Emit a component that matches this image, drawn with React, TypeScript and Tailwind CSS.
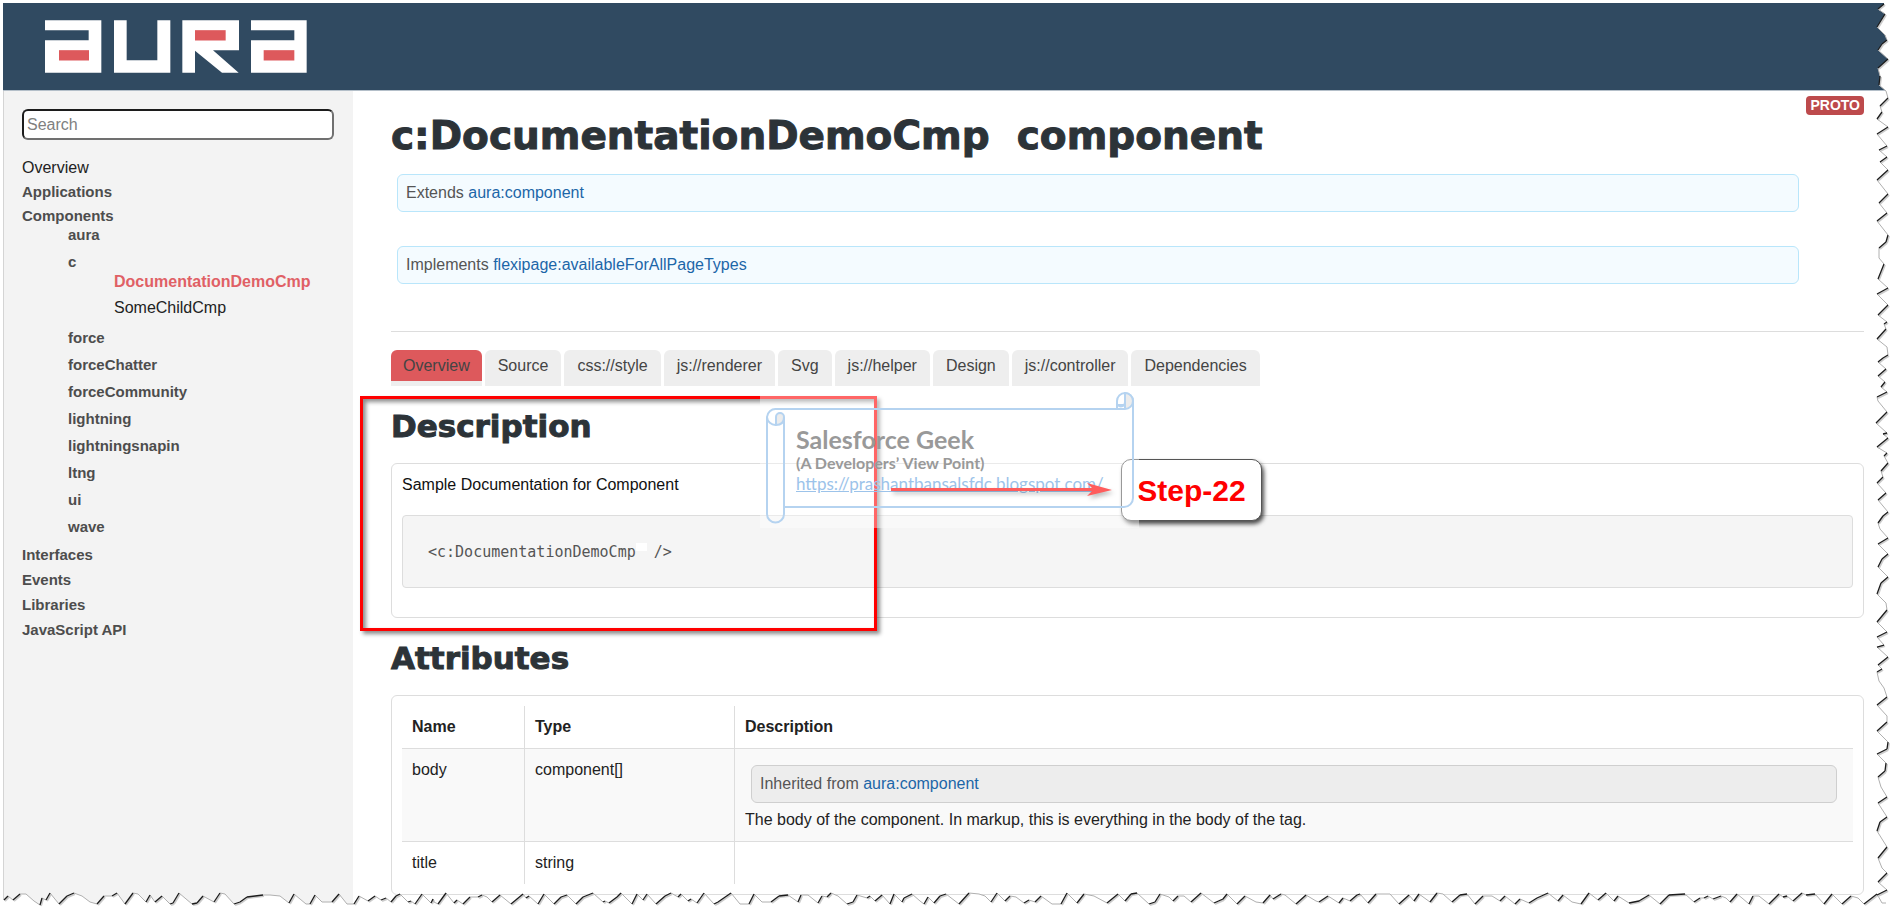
import React from "react";

const bottomEdge =
  "4,900 8,896 13,900 20,894 26,894 34,901 40,905 42,898 46,900 50,893 59,904 67,896 74,893 82,896 90,902 97,904 104,896 112,896 117,893 125,904 133,893 138,894 146,902 150,895 155,902 162,896 170,904 173,903 179,893 192,904 197,903 203,896 214,902 220,893 225,894 234,904 240,902 247,897 255,896 263,895 270,895 280,896 289,903 294,894 306,904 310,904 315,895 322,902 332,902 339,894 347,904 354,904 359,896 368,901 375,896 381,900 386,898 391,902 396,896 " +
  "400,894 408,902 411,901 415,904 422,894 431,903 433,899 434,902 438,904 446,893 454,903 457,900 463,904 470,897 478,897 482,895 487,897 492,902 500,895 511,904 523,894 526,898 529,896 538,904 544,894 554,904 561,897 567,895 576,904 583,897 593,893 603,902 605,901 609,903 617,897 621,893 632,904 637,894 643,900 647,894 656,904 665,896 671,893 678,897 681,894 688,901 691,899 697,903 704,893 714,904 718,902 731,893 740,904 749,904 754,894 762,902 771,902 779,896 788,895 798,902 801,895 808,895 818,903 822,896 827,897 831,893 838,896 847,904 853,902 857,895 867,898 870,896 875,901 882,895 890,904 894,894 902,902 904,898 912,894 " +
  "920,901 924,904 928,897 934,903 940,896 946,894 959,904 969,893 979,894 985,896 991,902 997,893 1005,901 1010,896 1016,897 1024,903 1029,900 1035,902 1041,896 1052,904 1061,904 1067,893 1077,903 1084,894 1094,896 1107,903 1118,894 1125,901 1131,894 1137,893 1149,904 1155,902 1160,894 1169,897 1173,901 1178,896 1184,896 1191,902 1201,893 1214,903 1223,899 1227,894 1237,904 1245,896 1256,902 1263,903 1270,895 1273,899 1281,894 1285,895 1296,904 1306,895 1316,901 1319,902 1328,896 1339,903 1343,898 1350,901 1357,895 1360,894 1368,903 1376,894 1390,894 1399,904 1409,895 1414,901 1419,894 1430,902 1437,893 1443,894 1452,902 1460,895 1467,894 1475,904 1483,896 1492,896 1500,901 1505,896 1515,904 1520,899 1529,903 1537,898 1548,893 1558,901 1563,895 1572,902 1581,904 1589,893 1598,900 1606,893 1614,901 1618,896 1629,903 1639,901 1649,895 1660,904 1669,895 1685,894 1694,902 " +
  "1700,898 1704,898 1708,896 1713,899 1721,896 1726,898 1730,902 1737,894 1742,898 1749,904 1753,896 1759,896 1769,904 1779,894 1783,897 1787,896 1793,901 1802,893 1806,895 1815,894 1824,904 1832,894 1842,904 1851,896 1858,898 1864,904 1877,894 1882,903 1886,903";

const rightEdge =
  "1884,4 1878,9 1885,14 1877,27 1885,35 1887,40 1882,44 1878,50 1888,59 1878,68 1880,76 1879,85 1886,91 1888,98 1880,106 1882,112 1877,119 1888,127 1877,134 1887,146 1879,150 1887,157 1880,162 1888,170 1877,180 1888,194 1879,203 1887,213 1877,221 1888,235 1886,242 1879,248 1879,258 1884,264 1878,279 1888,288 " +
  "1877,294 1888,305 1878,315 1887,322 1884,324 1886,329 1877,339 1887,347 1888,355 1883,358 1878,362 1886,369 1878,376 1885,382 1881,387 1887,392 1877,397 1878,401 1887,412 1876,423 1887,433 1883,434 1888,438 1877,447 1887,453 1884,456 1888,463 1881,471 1883,477 1877,483 1886,493 1878,500 1888,512 1883,516 1878,523 1880,529 1888,538 1878,544 1888,554 1882,559 1878,567 1888,577 1881,583 1877,594 1886,603 1887,610 1877,622 1887,632 1877,637 " +
  "1884,645 1877,647 1888,657 1878,665 1882,669 1877,672 1879,681 1884,688 1887,697 1877,705 1887,716 1887,722 1877,731 1888,742 1887,749 1877,754 1886,763 1885,771 1878,777 1881,787 1887,797 1878,803 1887,817 1880,822 1877,831 1887,847 1878,858 1882,868 1887,873 1878,882 1887,890 1877,895";

const tabs = [
  "Source",
  "css://style",
  "js://renderer",
  "Svg",
  "js://helper",
  "Design",
  "js://controller",
  "Dependencies",
];

const namespaces = [
  "force",
  "forceChatter",
  "forceCommunity",
  "lightning",
  "lightningsnapin",
  "ltng",
  "ui",
  "wave",
];

// the strokes facing the light are thin and gray, the others thick and dark
function TornLine({ points, axis }: { points: string; axis: 0 | 1 }) {
  const p = points.split(" ").map((s) => s.split(",").map(Number));
  let dark = "";
  let light = "";
  for (let i = 1; i < p.length; i++) {
    const seg = `M${p[i - 1][0]} ${p[i - 1][1]}L${p[i][0]} ${p[i][1]}`;
    if (p[i][axis] < p[i - 1][axis]) dark += seg;
    else light += seg;
  }
  return (
    <g fill="none">
      <path d={dark} stroke="#cccccc" strokeWidth="2" transform="translate(1 1)" />
      <path d={light} stroke="#b0b0b0" strokeWidth="1" />
      <path d={dark} stroke="#1c1c1c" strokeWidth="1.3" />
    </g>
  );
}

function Logo() {
  return (
    <svg viewBox="0 0 786 158" className="h-[53px] w-[262px]" role="img" aria-label="aura">
      <g fill="#ffffff">
        <path d="M0 0H169V158H0V60H131V30H0Z" />
        <path d="M207 0H245V120H337V0H376V158H207Z" />
        <path d="M412 0H582V90H504L581 158H531L450 92V158H412Z" />
        <path d="M618 0H785V158H618V60H748V30H618Z" />
      </g>
      <g fill="#dd595c">
        <path d="M42 90H132V121H42Z" />
        <path d="M450 30H542V61H450Z" />
        <path d="M656 90H748V121H656Z" />
      </g>
    </svg>
  );
}

function Sidebar() {
  return (
    <nav className="w-[350px] shrink-0 border-l border-[#d4d4d4] bg-[#f3f3f3] pl-[18px] text-[15px] font-bold text-[#4d4d4d]">
      <input
        type="text"
        placeholder="Search"
        aria-label="Search"
        className="mt-[18px] mb-4 block h-[31px] w-[312px] rounded-md border-2 border-t-[#1c1c1c] border-l-[#1c1c1c] border-r-[#707070] border-b-[#707070] bg-white px-[3px] text-base font-normal placeholder:text-[#808080]"
      />
      <ul>
        <li className="leading-6">
          <a href="#overview" className="text-base font-normal text-[#222222]">
            Overview
          </a>
        </li>
        <li className="leading-6">
          <a href="#applications">Applications</a>
        </li>
        <li>
          <a href="#components" className="block leading-6">
            Components
          </a>
          <ul className="-mt-[7px] mb-0.5 pl-[46px] leading-[27px]">
            <li>
              <a href="#aura">aura</a>
            </li>
            <li>
              <a href="#c" className="block">
                c
              </a>
              <ul className="-mt-1.5 mb-[3px] pl-[46px] text-base leading-[26px]">
                <li>
                  <a href="#demo" className="text-[#e06065]">
                    DocumentationDemoCmp
                  </a>
                </li>
                <li>
                  <a href="#child" className="font-normal text-[#222222]">
                    SomeChildCmp
                  </a>
                </li>
              </ul>
            </li>
            {namespaces.map((name) => (
              <li key={name}>
                <a href={`#${name}`}>{name}</a>
              </li>
            ))}
          </ul>
        </li>
        {["Interfaces", "Events", "Libraries", "JavaScript API"].map((name) => (
          <li key={name} className="leading-[25px]">
            <a href={`#${name}`}>{name}</a>
          </li>
        ))}
      </ul>
    </nav>
  );
}

function Heading({ children }: { children: React.ReactNode }) {
  return (
    <h2 className="mt-5 mb-[17px] font-['DejaVu_Sans',sans-serif] text-[31px] leading-10 font-bold text-[#2c3338] [-webkit-text-stroke:1px_#2c3338]">
      {children}
    </h2>
  );
}

function Watermark() {
  return (
    <div className="absolute top-[299px] left-[407px] h-[138px] w-[379px] bg-white/40">
      <svg
        viewBox="760 390 379 138"
        className="absolute inset-0 h-full w-full"
        fill="none"
        stroke="#b5d3f0"
        strokeWidth="2"
      >
        <path d="M776 409H1117V401A8 8 0 0 1 1133 401V498A9 9 0 0 1 1124 507H784" />
        <path d="M776 409A8.500 8.500 0 0 0 767 417V514A8.500 8.500 0 0 0 784 514V417" />
        <path
          d="M776 425V417A4 4 0 0 1 784 417Q784 425 776 425"
          fill="#ececec"
        />
        <path d="M767 417A8.500 8.500 0 0 0 776 425" />
        <path d="M1125 393A8 8 0 0 1 1125 409Z" fill="#ececec" />
        <path d="M1117 409H1125M1125 402A4 4 0 0 1 1118 405H1125" />
      </svg>
      <div className="relative pt-[35px] pl-9 font-['Lato','Open_Sans',sans-serif] text-[#999999]">
        <p className="text-[25px] leading-[28px] font-bold">Salesforce Geek</p>
        <p className="text-base leading-5 font-bold">(A Developers’ View Point)</p>
        <a
          href="https://prashantbansalsfdc.blogspot.com/"
          className="block text-[17px] leading-[22px] text-[#9cc3ea] underline"
        >
          https://prashantbansalsfdc.blogspot.com/
        </a>
      </div>
    </div>
  );
}

function Annotations() {
  return (
    <>
      <div className="pointer-events-none absolute top-[305px] left-[7px] h-[235px] w-[517px] border-3 border-[#ff0000] shadow-[3px_3px_4px_rgba(0,0,0,0.45),inset_3px_3px_4px_rgba(0,0,0,0.45)]" />
      <div className="absolute top-[368px] left-[768px] flex h-[62px] w-[141px] items-center justify-center rounded-[10px] border border-[#555555] bg-white pt-0.5 text-[30px] leading-9 font-bold text-[#ff0000] shadow-[2px_3px_4px_rgba(0,0,0,0.7)]">
        Step-22
      </div>
      <Watermark />
      <svg
        viewBox="0 0 226 20"
        className="absolute top-[388px] left-[536px] h-5 w-[226px] drop-shadow-[2px_3px_2px_rgba(0,0,0,0.25)]"
        fill="#ff5c5c"
      >
        <path d="M2 9H203L198 4L223 11L198 17L203 12H2Z" />
      </svg>
    </>
  );
}

function Attributes() {
  return (
    <div className="rounded-md border border-[#dddddd] p-2.5">
      <table className="w-full table-fixed border-separate border-spacing-0 text-left leading-6 text-[#222222] [&_td]:px-2.5 [&_td]:py-[9px] [&_td]:align-top [&_th]:px-2.5 [&_th]:py-[9px]">
        <colgroup>
          <col className="w-[122px]" />
          <col className="w-[210px]" />
          <col />
        </colgroup>
        <thead>
          <tr className="[&>th]:border-b [&>th]:border-[#dddddd]">
            <th>Name</th>
            <th className="border-l">Type</th>
            <th className="border-l">Description</th>
          </tr>
        </thead>
        <tbody>
          <tr className="bg-[#f9f9f9] [&>td]:border-b [&>td]:border-[#dddddd]">
            <td>body</td>
            <td className="border-l">component[]</td>
            <td className="border-l">
              <div className="mt-[7px] mr-1.5 mb-[5px] ml-1.5 rounded-md border border-[#cfcfcf] bg-[#ededed] px-2 py-1.5 text-[#555555]">
                Inherited from{" "}
                <a href="#aura-component" className="text-[#1c66a8]">
                  aura:component
                </a>
              </div>
              The body of the component. In markup, this is everything in the
              body of the tag.
            </td>
          </tr>
          <tr className="[&>td]:border-[#dddddd]">
            <td>title</td>
            <td className="border-l">string</td>
            <td className="border-l"></td>
          </tr>
        </tbody>
      </table>
    </div>
  );
}

export default function App() {
  const infoBox =
    "ml-1.5 mr-[65px] rounded-md border border-[#b9e6fb] bg-[#f4fbff] px-2 py-1.5 leading-6 text-[#555555]";
  return (
    <div className="relative flex min-h-screen flex-col overflow-hidden bg-white pt-[3px] pl-[3px] font-['Liberation_Sans',Arial,sans-serif] text-base">
      <header className="h-[88px] border-b border-[#b4bfc9] bg-[#304a61] pt-[17px] pl-[42px]">
        <Logo />
      </header>
      <div className="flex flex-1">
        <Sidebar />
        <main className="relative min-w-0 flex-1 pt-[21px] pr-[34px] pb-[18px] pl-[38px]">
          <span className="absolute top-[5px] right-[34px] rounded bg-[#bd4a4c] px-1 text-sm leading-[19px] font-bold text-white">
            PROTO
          </span>
          <h1 className="font-['DejaVu_Sans',sans-serif] text-[39px] leading-[48px] font-bold whitespace-nowrap text-[#2c3338] [-webkit-text-stroke:1px_#2c3338]">
            c:DocumentationDemoCmp&nbsp; component
          </h1>
          <div className={`mt-3.5 ${infoBox}`}>
            Extends{" "}
            <a href="#aura-component" className="text-[#1c66a8]">
              aura:component
            </a>
          </div>
          <div className={`mt-[34px] ${infoBox}`}>
            Implements{" "}
            <a href="#flexipage" className="text-[#1c66a8]">
              flexipage:availableForAllPageTypes
            </a>
          </div>
          <hr className="mt-[47px] border-[#dddddd]" />
          <div role="tablist" className="mt-[18px] flex gap-[3px] leading-6 text-[#444444]">
            <button
              role="tab"
              aria-selected="true"
              className="rounded-t-md border-b-5 border-[#eeeeee] bg-[#dd595c] px-3 pt-1 pb-[3px]"
            >
              Overview
            </button>
            {tabs.map((tab) => (
              <button key={tab} role="tab" className="rounded-t-md bg-[#eeeeee] px-[13px] pt-1 pb-2">
                {tab}
              </button>
            ))}
          </div>

          <Heading>Description</Heading>
          <div className="rounded-md border border-[#dddddd] px-2.5 pt-2.5 pb-[29px]">
            <p className="leading-[22px] text-[#111111]">Sample Documentation for Component</p>
            <pre className="relative mt-[19px] rounded border border-[#dddddd] bg-[#f5f5f5] px-[25px] pt-6 pb-[23px] font-['DejaVu_Sans_Mono',monospace] text-[15px] leading-[24px] text-[#555555]">
              {"<c:DocumentationDemoCmp  />"}
              <span className="absolute top-[27px] left-[233px] h-2 w-[11px] bg-white" />
            </pre>
          </div>

          <Heading>Attributes</Heading>
          <Attributes />
          <Annotations />
        </main>
      </div>

      {/* torn paper edges */}
      <svg
        viewBox="0 890 1898 24"
        className="pointer-events-none absolute bottom-0 left-0 h-6 w-[1898px] max-w-none"
      >
        <polygon points={`0,914 0,900 ${bottomEdge} 1898,903 1898,914`} fill="#ffffff" />
        <TornLine points={bottomEdge} axis={1} />
      </svg>
      <svg
        viewBox="1874 0 24 914"
        className="pointer-events-none absolute top-0 right-0 h-[914px] w-6"
      >
        <polygon points={`1898,0 1884,0 ${rightEdge} 1898,895`} fill="#ffffff" />
        <TornLine points={rightEdge} axis={0} />
      </svg>
    </div>
  );
}
